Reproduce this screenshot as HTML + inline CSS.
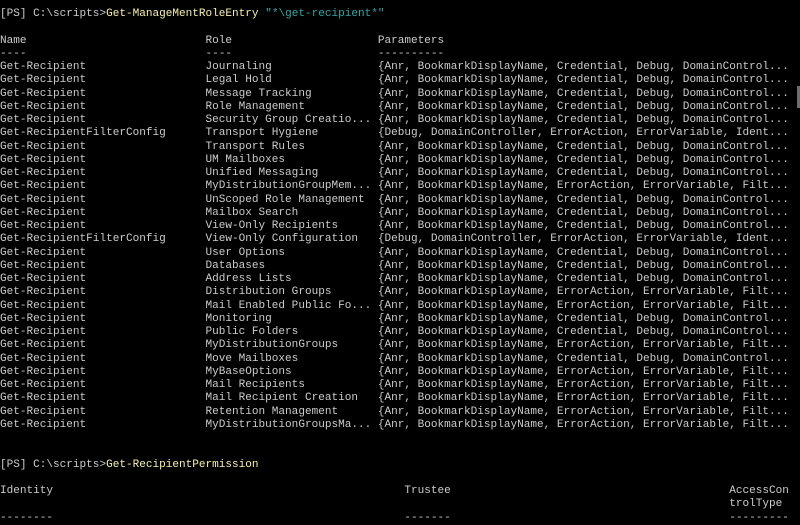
<!DOCTYPE html>
<html><head><meta charset="utf-8"><style>
html,body{margin:0;padding:0;background:#000;width:800px;height:521px;overflow:hidden}
pre{margin:0;position:absolute;left:0;top:8px;font-family:"Liberation Mono",monospace;font-size:11.05px;line-height:13.25px;color:#cccccc;white-space:pre}
.y{color:#f9f1a5}.c{color:#2fa7a7}
#sb{position:absolute;left:797px;top:86px;width:3px;height:22px;background:#6e6e6e}
</style></head><body>
<pre>[PS] C:\scripts&gt;<span class="y">Get-ManageMentRoleEntry</span> <span class="c">"*\get-recipient*"</span>

Name                           Role                      Parameters
----                           ----                      ----------
Get-Recipient                  Journaling                {Anr, BookmarkDisplayName, Credential, Debug, DomainControl...
Get-Recipient                  Legal Hold                {Anr, BookmarkDisplayName, Credential, Debug, DomainControl...
Get-Recipient                  Message Tracking          {Anr, BookmarkDisplayName, Credential, Debug, DomainControl...
Get-Recipient                  Role Management           {Anr, BookmarkDisplayName, Credential, Debug, DomainControl...
Get-Recipient                  Security Group Creatio... {Anr, BookmarkDisplayName, Credential, Debug, DomainControl...
Get-RecipientFilterConfig      Transport Hygiene         {Debug, DomainController, ErrorAction, ErrorVariable, Ident...
Get-Recipient                  Transport Rules           {Anr, BookmarkDisplayName, Credential, Debug, DomainControl...
Get-Recipient                  UM Mailboxes              {Anr, BookmarkDisplayName, Credential, Debug, DomainControl...
Get-Recipient                  Unified Messaging         {Anr, BookmarkDisplayName, Credential, Debug, DomainControl...
Get-Recipient                  MyDistributionGroupMem... {Anr, BookmarkDisplayName, ErrorAction, ErrorVariable, Filt...
Get-Recipient                  UnScoped Role Management  {Anr, BookmarkDisplayName, Credential, Debug, DomainControl...
Get-Recipient                  Mailbox Search            {Anr, BookmarkDisplayName, Credential, Debug, DomainControl...
Get-Recipient                  View-Only Recipients      {Anr, BookmarkDisplayName, Credential, Debug, DomainControl...
Get-RecipientFilterConfig      View-Only Configuration   {Debug, DomainController, ErrorAction, ErrorVariable, Ident...
Get-Recipient                  User Options              {Anr, BookmarkDisplayName, Credential, Debug, DomainControl...
Get-Recipient                  Databases                 {Anr, BookmarkDisplayName, Credential, Debug, DomainControl...
Get-Recipient                  Address Lists             {Anr, BookmarkDisplayName, Credential, Debug, DomainControl...
Get-Recipient                  Distribution Groups       {Anr, BookmarkDisplayName, ErrorAction, ErrorVariable, Filt...
Get-Recipient                  Mail Enabled Public Fo... {Anr, BookmarkDisplayName, ErrorAction, ErrorVariable, Filt...
Get-Recipient                  Monitoring                {Anr, BookmarkDisplayName, Credential, Debug, DomainControl...
Get-Recipient                  Public Folders            {Anr, BookmarkDisplayName, Credential, Debug, DomainControl...
Get-Recipient                  MyDistributionGroups      {Anr, BookmarkDisplayName, ErrorAction, ErrorVariable, Filt...
Get-Recipient                  Move Mailboxes            {Anr, BookmarkDisplayName, Credential, Debug, DomainControl...
Get-Recipient                  MyBaseOptions             {Anr, BookmarkDisplayName, ErrorAction, ErrorVariable, Filt...
Get-Recipient                  Mail Recipients           {Anr, BookmarkDisplayName, ErrorAction, ErrorVariable, Filt...
Get-Recipient                  Mail Recipient Creation   {Anr, BookmarkDisplayName, ErrorAction, ErrorVariable, Filt...
Get-Recipient                  Retention Management      {Anr, BookmarkDisplayName, ErrorAction, ErrorVariable, Filt...
Get-Recipient                  MyDistributionGroupsMa... {Anr, BookmarkDisplayName, ErrorAction, ErrorVariable, Filt...


[PS] C:\scripts&gt;<span class="y">Get-RecipientPermission</span>

Identity                                                     Trustee                                          AccessCon
                                                                                                              trolType
--------                                                     -------                                          ---------
</pre>
<div id="sb"></div>
</body></html>
